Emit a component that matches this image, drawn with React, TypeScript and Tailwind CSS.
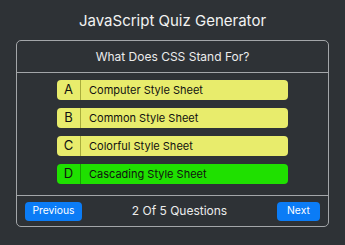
import React from 'react'

const options = [
  { key: 'A', text: 'Computer Style Sheet', correct: false },
  { key: 'B', text: 'Common Style Sheet', correct: false },
  { key: 'C', text: 'Colorful Style Sheet', correct: false },
  { key: 'D', text: 'Cascading Style Sheet', correct: true },
]

export default function App() {
  return (
    <div className="h-[245px] w-[345px] overflow-hidden bg-[#2e3236] px-4 font-['Inter',sans-serif] text-white">
      <h1 className="flex h-10 items-center justify-center text-[15px] leading-none text-[#f2f2f2]">
        JavaScript Quiz Generator
      </h1>
      <div className="rounded-[5px] border border-[#a3a6a9]">
        <div className="flex h-8 items-center justify-center border-b border-[#a3a6a9] text-[12px] text-[#ececec]">
          What Does CSS Stand For?
        </div>
        <div className="flex flex-col items-center gap-2 pt-[7px] pb-[11px]">
          {options.map((o) => (
            <div
              key={o.key}
              className={
                o.correct
                  ? 'flex h-5 w-[231px] items-center rounded-[4px] bg-[#1fe000] text-[#111]'
                  : 'flex h-5 w-[231px] items-center rounded-[4px] bg-[#e8ec6c] text-[#111]'
              }
            >
              <span
                className={
                  o.correct
                    ? 'flex h-full w-6 items-center justify-center border-r border-[#16a000] text-[13px]'
                    : 'flex h-full w-6 items-center justify-center border-r border-[#a9ad3c] text-[13px]'
                }
              >
                {o.key}
              </span>
              <span className="pl-2 text-[11px]">{o.text}</span>
            </div>
          ))}
        </div>
        <div className="flex h-[31px] items-center justify-between border-t border-[#a3a6a9] px-2">
          <button className="h-[19px] w-[57px] rounded-[4px] bg-[#0b7cf6] text-[10.3px] text-white">
            Previous
          </button>
          <span className="text-[12px] text-[#ececec]">2 Of 5 Questions</span>
          <button className="h-[19px] w-[43px] rounded-[4px] bg-[#0b7cf6] text-[10.3px] text-white">
            Next
          </button>
        </div>
      </div>
    </div>
  )
}
